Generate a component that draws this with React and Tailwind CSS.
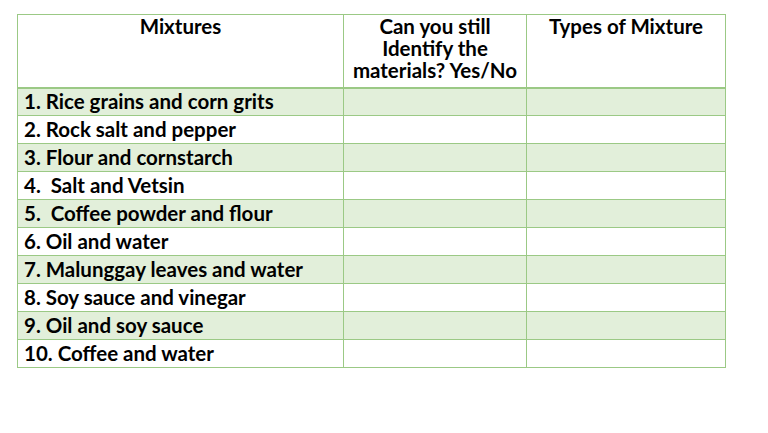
const rows = [
  "1. Rice grains and corn grits",
  "2. Rock salt and pepper",
  "3. Flour and cornstarch",
  "4.  Salt and Vetsin",
  "5.  Coffee powder and flour",
  "6. Oil and water",
  "7. Malunggay leaves and water",
  "8. Soy sauce and vinegar",
  "9. Oil and soy sauce",
  "10. Coffee and water",
];

export default function App() {
  return (
    <div className="w-[768px] h-[433px] bg-white pt-[14px] pl-[17px] font-['Lato','Open_Sans',sans-serif] text-black">
      <table className="border-collapse table-fixed w-[708px]">
        <colgroup>
          <col className="w-[326px]" />
          <col className="w-[183px]" />
          <col className="w-[199px]" />
        </colgroup>
        <thead>
          <tr className="h-[73px]">
            <th className="border border-[#9bc985] border-b-2 align-top text-center font-bold text-[20.5px] leading-[22px] pt-0">
              Mixtures
            </th>
            <th className="border border-[#9bc985] border-b-2 align-top text-center font-bold text-[20.5px] leading-[22px] pt-0">
              Can you still
              <br />
              Identify the
              <br />
              materials? Yes/No
            </th>
            <th className="border border-[#9bc985] border-b-2 align-top text-center font-bold text-[20.5px] leading-[22px] pt-0">
              Types of Mixture
            </th>
          </tr>
        </thead>
        <tbody>
          {rows.map((r, i) => (
            <tr key={r} className={i % 2 === 0 ? "h-[28px] bg-[#e2efda]" : "h-[28px] bg-white"}>
              <td className="border border-[#9bc985] pl-[6px] pb-[2px] font-bold text-[20.5px] leading-[22px] whitespace-pre">
                {r}
              </td>
              <td className="border border-[#9bc985]"></td>
              <td className="border border-[#9bc985]"></td>
            </tr>
          ))}
        </tbody>
      </table>
    </div>
  );
}
